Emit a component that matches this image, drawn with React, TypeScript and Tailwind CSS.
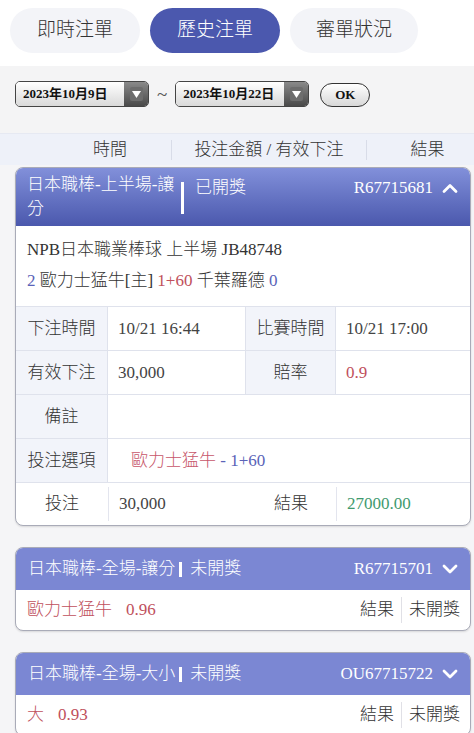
import React from "react";

const F = "font-['Liberation_Serif','Noto_Sans_CJK_TC',serif]";

function Chevron({ up }: { up?: boolean }) {
  return (
    <svg width="16" height="12" viewBox="0 0 16 12" className="shrink-0">
      <polyline
        points={up ? "2,9.5 8,3.5 14,9.5" : "2,3 8,9 14,3"}
        fill="none"
        stroke="white"
        strokeWidth="2.8"
        strokeLinecap="round"
        strokeLinejoin="round"
      />
    </svg>
  );
}

function DateSelect({ text }: { text: string }) {
  return (
    <div className="flex h-[26px] w-[134px] overflow-hidden rounded-[5px] border border-[#444]">
      <div className="flex flex-1 items-center bg-linear-to-b from-white to-[#d9d9d9] pl-[7px] text-[13px] font-semibold text-[#111]">
        {text}
      </div>
      <div className="flex w-[24px] items-center justify-center bg-linear-to-b from-[#8a8a8a] to-[#4a4a4a]">
        <div className="flex h-[14px] w-[13px] items-center justify-center rounded-[2px] bg-[#6d6d6d]">
          <svg width="9" height="7" viewBox="0 0 9 7">
            <polygon points="0,0 9,0 4.5,7" fill="white" />
          </svg>
        </div>
      </div>
    </div>
  );
}

function Row({
  l1,
  v1,
  l2,
  v2,
}: {
  l1: string;
  v1: React.ReactNode;
  l2?: string;
  v2?: React.ReactNode;
}) {
  return (
    <div className="flex h-[44px] border-b border-[#dfe2ec]">
      <div className="flex w-[92px] items-center justify-center bg-[#f2f4fa] text-[17px] text-[#333] border-r border-[#dfe2ec]">
        {l1}
      </div>
      {l2 !== undefined ? (
        <>
          <div className="flex w-[138px] items-center pl-[10px] text-[17px] text-[#444] border-r border-[#dfe2ec]">
            {v1}
          </div>
          <div className="flex w-[90px] items-center justify-center bg-[#f2f4fa] text-[17px] text-[#333] border-r border-[#dfe2ec]">
            {l2}
          </div>
          <div className="flex flex-1 items-center pl-[10px] text-[17px] text-[#444]">{v2}</div>
        </>
      ) : (
        <div className="flex flex-1 items-center text-[17px]">{v1}</div>
      )}
    </div>
  );
}

function SmallCard({
  title,
  code,
  pick,
  odds,
}: {
  title: string;
  code: string;
  pick: string;
  odds: string;
}) {
  return (
    <div className="w-[456px] overflow-hidden rounded-[8px] border border-[#a9abb8] bg-white shadow-[0_1px_2px_rgba(0,0,0,0.12)]">
      <div className="flex h-[42px] items-center bg-[#7b87d3] pl-[12px] pr-[12px] text-[17px] text-white">
        <span>{title}</span>
        <span className="ml-[4px] mr-[8px] inline-block h-[15px] w-[3px] bg-white" />
        <span>未開獎</span>
        <span className="ml-auto mr-[9px] text-[17px]">{code}</span>
        <Chevron />
      </div>
      <div className="flex h-[40px] items-center pl-[11px] pr-[10px]">
        <span className="text-[17px] text-[#c0505c]">{pick}</span>
        <span className="ml-[14px] text-[17px] text-[#c0505c]">{odds}</span>
        <span className="ml-auto text-[17px] text-[#333]">結果</span>
        <span className="mx-[7px] h-[26px] w-px bg-[#e0e0e6]" />
        <span className="text-[17px] text-[#333]">未開獎</span>
      </div>
    </div>
  );
}

export default function App() {
  return (
    <div className={`h-[733px] w-[474px] overflow-hidden bg-[#f5f5f7] font-light ${F}`}>
      {/* Tabs */}
      <div className="flex h-[66px] gap-[10px] bg-white pl-[10px] pt-[8px]">
        <div className="flex h-[45px] w-[130px] items-center justify-center rounded-full bg-[#f3f4f8] text-[19px] text-[#333]">
          即時注單
        </div>
        <div className="flex h-[45px] w-[130px] items-center justify-center rounded-full bg-[#4b58ae] text-[19px] text-white">
          歷史注單
        </div>
        <div className="flex h-[45px] w-[128px] items-center justify-center rounded-full bg-[#f3f4f8] text-[19px] text-[#333]">
          審單狀況
        </div>
      </div>

      {/* Date row */}
      <div className="flex h-[67px] items-start bg-[#f4f4f5] pl-[15px] pt-[15px]">
        <DateSelect text="2023年10月9日" />
        <span className="mx-[8px] text-[19px] text-[#555]">~</span>
        <DateSelect text="2023年10月22日" />
        <div className="ml-[11px] mt-[2px] flex h-[24px] w-[50px] items-center justify-center rounded-full border border-[#333] bg-linear-to-b from-white to-[#d8d8d8] text-[13px] font-semibold text-[#111]">
          OK
        </div>
      </div>

      {/* Column header */}
      <div className="flex h-[32px] items-center border-t border-[#e6e9f2] bg-[#eef1f9] text-[17px] text-[#333]">
        <div className="flex w-[171px] justify-center pl-[49px]">時間</div>
        <span className="h-[20px] w-px bg-[#d8dce8]" />
        <div className="flex w-[194px] justify-center">投注金額 / 有效下注</div>
        <span className="h-[20px] w-px bg-[#d8dce8]" />
        <div className="flex flex-1 justify-center pl-[14px]">結果</div>
      </div>

      <div className="flex flex-col gap-[21px] pl-[15px] pt-[2px]">
        {/* Card 1 */}
        <div className="w-[456px] overflow-hidden rounded-[8px] border border-[#a9abb8] bg-white shadow-[0_1px_2px_rgba(0,0,0,0.12)]">
          <div className="flex h-[58px] items-center bg-linear-to-b from-[#8290da] to-[#4b58ad] pl-[11px] pr-[12px] text-[17px] leading-[24px] text-white">
            <div className="w-[150px]">日本職棒-上半場-讓分</div>
            <span className="ml-[4px] mr-[11px] mt-[2px] h-[32px] w-[3px] bg-white" />
            <span className="self-start pt-[8px]">已開獎</span>
            <span className="ml-auto mr-[9px] self-start pt-[8px]">R67715681</span>
            <div className="self-start pt-[14px]">
              <Chevron up />
            </div>
          </div>
          <div className="px-[11px] pt-[8px] pb-[10px] text-[17px] leading-[31px] text-[#333]">
            <div>NPB日本職業棒球 上半場 JB48748</div>
            <div>
              <span className="text-[#5a63b8]">2</span> 歐力士猛牛[主]{" "}
              <span className="text-[#c0505c]">1+60</span> 千葉羅德{" "}
              <span className="text-[#5a63b8]">0</span>
            </div>
          </div>
          <div className="border-t border-[#dfe2ec]">
            <Row l1="下注時間" v1="10/21 16:44" l2="比賽時間" v2="10/21 17:00" />
            <Row l1="有效下注" v1="30,000" l2="賠率" v2={<span className="text-[#c0505c]">0.9</span>} />
            <Row l1="備註" v1="" />
            <Row
              l1="投注選項"
              v1={
                <span className="pl-[23px] text-[17px]">
                  <span className="text-[#c7566a]">歐力士猛牛</span>
                  <span className="text-[#5a63b8]"> - 1+60</span>
                </span>
              }
            />
            <div className="flex h-[42px] items-center">
              <div className="flex w-[92px] justify-center text-[17px] text-[#333]">投注</div>
              <span className="h-[34px] w-px bg-[#e3e5ee]" />
              <div className="w-[137px] pl-[10px] text-[17px] text-[#444]">30,000</div>
              <div className="flex w-[90px] justify-center text-[17px] text-[#333]">結果</div>
              <span className="h-[34px] w-px bg-[#e3e5ee]" />
              <div className="flex-1 pl-[10px] text-[17px] text-[#3f9a6e]">27000.00</div>
            </div>
          </div>
        </div>

        <SmallCard title="日本職棒-全場-讓分" code="R67715701" pick="歐力士猛牛" odds="0.96" />
        <SmallCard title="日本職棒-全場-大小" code="OU67715722" pick="大" odds="0.93" />
      </div>
    </div>
  );
}
